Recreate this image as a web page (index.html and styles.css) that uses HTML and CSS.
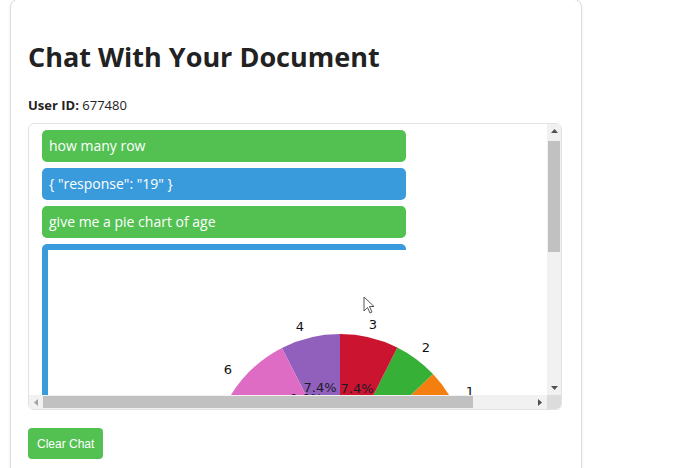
FILE: index.html
```html
<!DOCTYPE html>
<html>
<head>
<meta charset="utf-8">
<link rel="stylesheet" href="styles.css">
</head>
<body>
<div class="card">
  <h1 class="title">Chat With Your Document</h1>
  <p class="user"><strong>User ID:</strong> 677480</p>
  <div class="chat">
    <div class="viewport">
      <div class="msg user-msg">how many row</div>
      <div class="msg bot-msg">{ "response": "19" }</div>
      <div class="msg user-msg">give me a pie chart of age</div>
      <div class="msg bot-msg img-msg">
        <svg class="chart" width="580" height="460" viewBox="0 0 580 460" xmlns="http://www.w3.org/2000/svg">
          <rect width="580" height="460" fill="#ffffff"/>
          <path d="M292,212 L420,212 A128,128 0 0 0 414.5,175 Z" fill="#1f77b4"/>
          <path d="M292,212 L414.5,175 A128,128 0 0 0 385,124.1 Z" fill="#f47f10"/>
          <path d="M292,212 L385,124.1 A128,128 0 0 0 349.3,97.5 Z" fill="#36b036"/>
          <path d="M292,212 L349.3,97.5 A128,128 0 0 0 292,84 Z" fill="#cb1430"/>
          <path d="M292,212 L292,84 A128,128 0 0 0 233.9,97.9 Z" fill="#9160bd"/>
          <path d="M292,212 L233.9,97.9 A128,128 0 0 0 170.3,172.4 Z" fill="#de6cc4"/>
          <path d="M292,212 L170.3,172.4 A128,128 0 0 0 172,256 Z" fill="#7f7f7f"/>
          <path d="M292,212 L172,256 A128,128 0 0 0 260,336 Z" fill="#bcbd22"/>
          <path d="M292,212 L260,336 A128,128 0 0 0 380,305 Z" fill="#17becf"/>
          <path d="M292,212 L380,305 A128,128 0 0 0 420,212 Z" fill="#1f77b4"/>
          <g class="lbl">
            <text x="422" y="146" text-anchor="middle">1</text>
            <text x="378" y="102" text-anchor="middle">2</text>
            <text x="325" y="79" text-anchor="middle">3</text>
            <text x="252" y="81" text-anchor="middle">4</text>
            <text x="180" y="124" text-anchor="middle">6</text>
          </g>
          <g class="pct">
            <text x="309" y="143" text-anchor="middle">7.4%</text>
            <text x="272" y="142" text-anchor="middle">7.4%</text>
            <text x="258" y="153" text-anchor="middle">0.0%</text>
            <text x="338" y="158" text-anchor="middle">7.4%</text>
          </g>
          <path d="M316,47 L316,61 L319.5,57.5 L322,63 L324,62 L321.5,56.5 L326,56.5 Z" fill="#ffffff" stroke="#444" stroke-width="0.9" stroke-linejoin="round"/>
        </svg>
      </div>
    </div>
    <div class="vbar">
      <div class="sbtn"><svg width="7" height="4" viewBox="0 0 7 4"><path d="M0 4 L3.5 0 L7 4 Z" fill="#505050"/></svg></div>
      <div class="vtrack"><div class="vthumb"></div></div>
      <div class="sbtn"><svg width="7" height="4" viewBox="0 0 7 4"><path d="M0 0 L7 0 L3.5 4 Z" fill="#505050"/></svg></div>
    </div>
    <div class="hbar">
      <div class="sbtn"><svg width="4" height="7" viewBox="0 0 4 7"><path d="M4 0 L4 7 L0 3.5 Z" fill="#a3a3a3"/></svg></div>
      <div class="htrack"><div class="hthumb"></div></div>
      <div class="sbtn"><svg width="4" height="7" viewBox="0 0 4 7"><path d="M0 0 L4 3.5 L0 7 Z" fill="#505050"/></svg></div>
    </div>
    <div class="corner"></div>
  </div>
  <button class="clear">Clear Chat</button>
</div>
</body>
</html>
```

FILE: styles.css
```css
html, body {
  margin: 0;
  padding: 0;
  background: #ffffff;
}
body {
  font-family: "Open Sans", "Noto Sans", sans-serif;
  color: #222;
}
.card {
  box-sizing: border-box;
  width: 572px;
  margin: -1px 0 0 10px;
  padding: 40px 19px 30px 17px;
  border: 1px solid #dddddd;
  border-radius: 8px;
  box-shadow: 0 1px 4px rgba(0,0,0,0.06);
  background: #fff;
}
.title {
  margin: 0;
  font-size: 27px;
  line-height: 34px;
  font-weight: 700;
  color: #222;
}
.user {
  margin: 21px 0 8px 0;
  font-size: 13px;
  line-height: 20px;
  color: #222;
}
.chat {
  box-sizing: border-box;
  height: 287px;
  border: 1px solid #e2e2e2;
  border-radius: 6px;
  overflow: hidden;
  display: grid;
  grid-template-columns: 1fr 14px;
  grid-template-rows: 1fr 14px;
}
.viewport {
  min-width: 0;
  min-height: 0;
  overflow: hidden;
  padding: 6px 6px 6px 13px;
  display: flex;
  flex-direction: column;
  gap: 6px;
}
.vbar {
  display: flex;
  flex-direction: column;
  background: #f1f1f1;
}
.hbar {
  display: flex;
  flex-direction: row;
  background: #f1f1f1;
}
.sbtn {
  width: 14px;
  height: 14px;
  flex: none;
  display: flex;
  align-items: center;
  justify-content: center;
}
.vtrack {
  flex: 1;
  padding: 3px 1px 0 1px;
}
.vthumb {
  height: 111px;
  background: #c1c1c1;
}
.htrack {
  flex: 1;
  padding: 1px 0 1px 0;
}
.hthumb {
  width: 430px;
  height: 100%;
  background: #c1c1c1;
}
.corner {
  background: #dcdcdc;
}
.msg {
  box-sizing: border-box;
  width: 364px;
  flex: none;
  padding: 7px 7px;
  border-radius: 5px;
  color: #ffffff;
  font-size: 14px;
  line-height: 18px;
}
.user-msg {
  background: #52c152;
}
.bot-msg {
  background: #3a9bdc;
}
.img-msg {
  padding: 6px;
}
.chart {
  display: block;
}
.lbl text {
  font-family: "DejaVu Sans", sans-serif;
  font-size: 13px;
  fill: #111;
}
.pct text {
  font-family: "DejaVu Sans", sans-serif;
  font-size: 13px;
  fill: #1a1a2a;
}
.clear {
  margin-top: 18px;
  background: #52c152;
  color: #fff;
  border: none;
  border-radius: 4px;
  padding: 0 9px;
  height: 31px;
  font-family: "Liberation Sans", Arial, sans-serif;
  font-size: 12px;
}
```
